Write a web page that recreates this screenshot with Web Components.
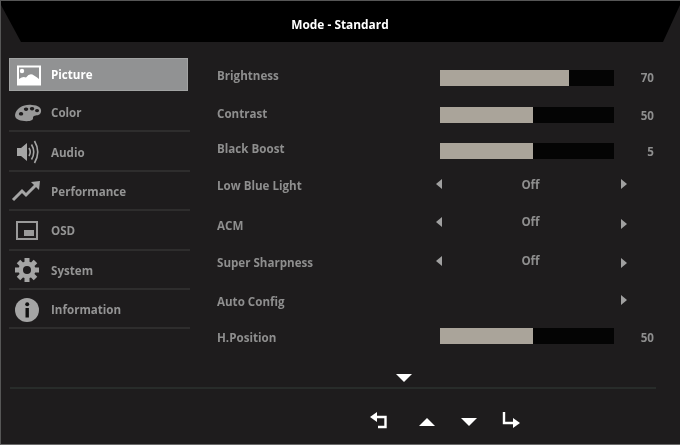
<!DOCTYPE html>
<html>
<head>
<meta charset="utf-8">
<title>OSD</title>
<style>
  html, body { margin: 0; padding: 0; background: #1e1c1d; }
</style>
</head>
<body>
<osd-screen>
  <osd-header slot="header">Mode - Standard</osd-header>

  <osd-sidebar slot="side">
    <osd-item active>
      <svg slot="icon" width="42" height="32" viewBox="0 0 42 32">
        <rect x="9" y="7.5" width="22" height="18" fill="none" stroke="#fff" stroke-width="2"/>
        <circle cx="13" cy="12" r="2.2" fill="#fff"/>
        <path d="M10 22 L10 20 Q14 17 17 18.5 Q21 13 25 16.5 Q28 18 30 20 L30 25 L10 25 Z" fill="#fff"/>
      </svg>
      Picture
    </osd-item>
    <osd-item>
      <svg slot="icon" width="42" height="32" viewBox="0 0 42 32">
        <path fill-rule="evenodd" fill="#999" d="M6 18 C7 11 15 7 23 8 C29 8 33 11 32 15 C31 19 27 18 25 19 C23 20 25 22 23 23 C20 25 13 24 10 23 C7 22 6 20 6 18 Z M12 15 a2.2 1.8 0 1 0 .1 0 Z M17 10.5 a2.2 1.7 0 1 0 .1 0 Z M23 10 a2.2 1.7 0 1 0 .1 0 Z M28 12 a2 1.6 0 1 0 .1 0 Z"/>
      </svg>
      Color
    </osd-item>
    <osd-item>
      <svg slot="icon" width="42" height="32" viewBox="0 0 42 32">
        <path d="M8 12 L12 12 L18 7 L18 25 L12 20 L8 20 Z" fill="#a5a5a5"/>
        <g fill="none" stroke="#a5a5a5" stroke-width="1.6">
          <path d="M20 12 Q22.5 16 20 20"/>
          <path d="M22.5 8.5 Q27 16 22.5 23.5"/>
          <path d="M25.5 5 Q32 16 25.5 27"/>
        </g>
      </svg>
      Audio
    </osd-item>
    <osd-item>
      <svg slot="icon" width="42" height="32" viewBox="0 0 42 32">
        <path d="M4 25 L13 16 L17 20 L27 10" fill="none" stroke="#a5a5a5" stroke-width="3"/>
        <path d="M22 7 L31 6 L30 15 Z" fill="#a5a5a5"/>
      </svg>
      Performance
    </osd-item>
    <osd-item>
      <svg slot="icon" width="42" height="32" viewBox="0 0 42 32">
        <rect x="8" y="7" width="20" height="17" fill="none" stroke="#9a9a9a" stroke-width="2"/>
        <rect x="15" y="15" width="10" height="6" fill="#9a9a9a"/>
      </svg>
      OSD
    </osd-item>
    <osd-item>
      <svg slot="icon" width="42" height="32" viewBox="0 0 42 32" style="margin-right:-1px">
        <g fill="#a5a5a5" transform="translate(18 16)">
          <rect x="-2.5" y="-12" width="5" height="24"/>
          <rect x="-2.5" y="-12" width="5" height="24" transform="rotate(45)"/>
          <rect x="-2.5" y="-12" width="5" height="24" transform="rotate(90)"/>
          <rect x="-2.5" y="-12" width="5" height="24" transform="rotate(135)"/>
          <circle r="8.5"/>
          <circle r="4" fill="#1e1c1d"/>
        </g>
      </svg>
      System
    </osd-item>
    <osd-item>
      <svg slot="icon" width="42" height="32" viewBox="0 0 42 32">
        <circle cx="18" cy="16" r="12" fill="#a5a5a5"/>
        <rect x="16.5" y="14" width="3.4" height="9.5" fill="#111"/>
        <circle cx="18.2" cy="10.3" r="2" fill="#111"/>
      </svg>
      Information
    </osd-item>
  </osd-sidebar>

  <osd-settings slot="main">
    <osd-row style="--h:37px;--ly:4px;--cy:6px;--vy:6px" type="bar" fill="74" value="70">Brightness</osd-row>
    <osd-row style="--h:35px;--ly:5px;--cy:6px;--vy:7px" type="bar" fill="53.5" value="50">Contrast</osd-row>
    <osd-row style="--h:36px;--ly:5px;--cy:7px;--vy:8px" type="bar" fill="53.5" value="5">Black Boost</osd-row>
    <osd-row style="--h:38px;--ly:6px;--cy:5px;--vy:0px;--al:7px;--ar:7px" type="choice" value="Off">Low Blue Light</osd-row>
    <osd-row style="--h:38px;--ly:8px;--cy:4px;--vy:0px;--al:7px;--ar:9px" type="choice" value="Off">ACM</osd-row>
    <osd-row style="--h:38px;--ly:7px;--cy:5px;--vy:0px;--al:8px;--ar:10px" type="choice" value="Off">Super Sharpness</osd-row>
    <osd-row style="--h:36px;--ly:8px;--cy:0px;--vy:0px;--al:0px;--ar:9px" type="action">Auto Config</osd-row>
    <osd-row style="--h:24px;--ly:8px;--cy:6px;--vy:8px" type="bar" fill="53.5" value="50">H.Position</osd-row>
  </osd-settings>

  <osd-footer slot="footer"></osd-footer>
</osd-screen>

<script>
class OsdScreen extends HTMLElement {
  constructor() {
    super();
    this.attachShadow({ mode: 'open' }).innerHTML = `
      <style>
        :host {
          display: block;
          width: 680px;
          height: 445px;
          box-sizing: border-box;
          overflow: hidden;
          background: #1e1c1d;
          border-top: 1px solid #565656;
          border-left: 1px solid #565656;
          border-bottom: 1px solid #6a6a6a;
          font-family: "Open Sans", sans-serif;
          font-size: 11.6px;
          font-weight: 700;
          filter: blur(0.35px);
        }
        .main {
          display: grid;
          grid-template-columns: 181px 1fr;
          column-gap: 27px;
          height: 332px;
          padding-left: 8px;
          box-sizing: border-box;
        }
      </style>
      <slot name="header"></slot>
      <div class="main">
        <slot name="side"></slot>
        <slot name="main"></slot>
      </div>
      <slot name="footer"></slot>
    `;
  }
}

class OsdHeader extends HTMLElement {
  constructor() {
    super();
    this.attachShadow({ mode: 'open' }).innerHTML = `
      <style>
        :host {
          display: flex;
          justify-content: center;
          box-sizing: border-box;
          height: 41px;
          padding-top: 15px;
          padding-right: 1px;
          background: #000;
          color: #fff;
          font-size: 11.9px;
          line-height: 16px;
          clip-path: polygon(0 0, 679px 0, 679px 4px, 662px 41px, 20px 41px, 0 4px);
        }
      </style>
      <slot></slot>
    `;
  }
}

class OsdSidebar extends HTMLElement {
  constructor() {
    super();
    this.attachShadow({ mode: 'open' }).innerHTML = `
      <style>
        :host { display: block; padding-top: 16px; }
      </style>
      <slot></slot>
    `;
  }
}

class OsdItem extends HTMLElement {
  constructor() {
    super();
    this.attachShadow({ mode: 'open' }).innerHTML = `
      <style>
        :host {
          display: flex;
          align-items: center;
          box-sizing: border-box;
          height: 39.4px;
          padding-top: 3px;
          color: #949494;
          border-bottom: 2px solid #2e2d2d;
          line-height: 16px;
        }
        :host([active]) {
          height: 33px;
          width: 179px;
          padding-top: 0;
          margin-bottom: 2px;
          color: #fff;
          background: #919293;
          border: 1px solid #a2a3a3;
          border-bottom: 1px solid #a2a3a3;
        }
        .icon { display: flex; width: 42px; flex: none; margin-top: -1px; }
        :host([active]) .icon { margin-left: -1px; margin-top: 0; }
      </style>
      <span class="icon"><slot name="icon"></slot></span>
      <slot></slot>
    `;
  }
}

class OsdSettings extends HTMLElement {
  constructor() {
    super();
    this.attachShadow({ mode: 'open' }).innerHTML = `
      <style>
        :host { display: block; padding-top: 22px; }
      </style>
      <slot></slot>
    `;
  }
}

class OsdRow extends HTMLElement {
  constructor() {
    super();
    const type = this.getAttribute('type');
    const value = this.getAttribute('value') || '';
    const fill = this.getAttribute('fill') || 0;
    const left = '<svg class="al" width="7" height="10" viewBox="0 0 7 10"><path d="M7 0 L1 5 L7 10 Z" fill="#a0a0a0"/></svg>';
    const right = '<svg class="ar" width="7" height="10" viewBox="0 0 7 10"><path d="M1 0 L7 5 L1 10 Z" fill="#a0a0a0"/></svg>';
    let control = '';
    if (type === 'bar') {
      control = `<div class="bar"><div class="fill" style="width:${fill}%"></div></div><div class="value">${value}</div>`;
    } else if (type === 'choice') {
      control = `<div class="choice">${left}<span class="off">${value}</span>${right}</div>`;
    } else {
      control = `<div class="choice"><span></span>${right}</div>`;
    }
    this.attachShadow({ mode: 'open' }).innerHTML = `
      <style>
        :host {
          display: grid;
          grid-template-columns: 223px 174px 1fr;
          align-items: start;
          height: var(--h);
          color: #8e8e8e;
          line-height: 16px;
        }
        .label { margin-top: var(--ly); }
        .bar {
          margin-top: var(--cy);
          height: 16px;
          background: #040404;
        }
        .fill { height: 100%; background: #aaa49a; }
        .value {
          margin-top: var(--vy);
          margin-right: 26px;
          text-align: right;
        }
        .choice {
          grid-column: 2 / 4;
          display: flex;
          justify-content: space-between;
          width: 192px;
          margin-left: -5px;
        }
        .off { margin-top: var(--cy); margin-left: -1px; }
        .al { margin-top: var(--al); }
        .ar { margin-top: var(--ar); }
      </style>
      <div class="label"><slot></slot></div>
      ${control}
    `;
  }
}

class OsdFooter extends HTMLElement {
  constructor() {
    super();
    this.attachShadow({ mode: 'open' }).innerHTML = `
      <style>
        :host { display: block; height: 70px; }
        .more { display: block; margin-left: 395px; }
        .rule {
          height: 2px;
          width: 646px;
          margin: 5px 0 0 9px;
          background: #282c2a;
        }
        .nav {
          display: flex;
          align-items: center;
          gap: 25px;
          margin: 23px 0 0 369px;
        }
        svg { flex: none; }
      </style>
      <svg class="more" width="16" height="8" viewBox="0 0 16 8"><path d="M0 0 H16 L8 8 Z" fill="#fff"/></svg>
      <div class="rule"></div>
      <div class="nav">
        <svg width="18" height="17" viewBox="0 0 18 17" style="margin-right:6px">
          <path d="M0 5 L7 0 L7 10 Z" fill="#fff"/>
          <path d="M6 5 H15.5 V15 H8" fill="none" stroke="#fff" stroke-width="2.4"/>
        </svg>
        <svg width="16" height="8" viewBox="0 0 16 8" style="margin-top:2px"><path d="M8 0 L16 8 H0 Z" fill="#fff"/></svg>
        <svg width="16" height="8" viewBox="0 0 16 8" style="margin:2px 0 0 1px"><path d="M0 0 H16 L8 8 Z" fill="#fff"/></svg>
        <svg width="18" height="17" viewBox="0 0 18 17">
          <path d="M2 0 V11 H12" fill="none" stroke="#fff" stroke-width="2.4"/>
          <path d="M11 6 L18 11 L11 16 Z" fill="#fff"/>
        </svg>
      </div>
    `;
  }
}

customElements.define('osd-screen', OsdScreen);
customElements.define('osd-header', OsdHeader);
customElements.define('osd-sidebar', OsdSidebar);
customElements.define('osd-item', OsdItem);
customElements.define('osd-settings', OsdSettings);
customElements.define('osd-row', OsdRow);
customElements.define('osd-footer', OsdFooter);
</script>
</body>
</html>
